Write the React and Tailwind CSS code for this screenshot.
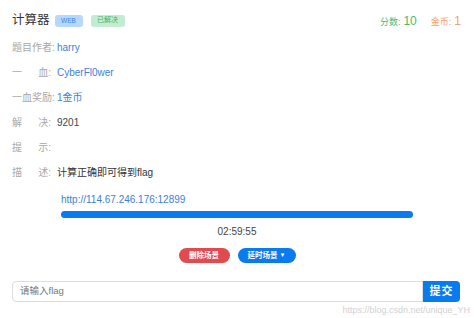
export default function App() {
  const rows = [
    { label: ["题", "目", "作", "者:"], value: "harry", color: "text-[#3d7fd9]" },
    { label: ["一", "血:"], value: "CyberFl0wer", color: "text-[#3d7fd9]" },
    { label: ["一", "血", "奖", "励:"], value: "1金币", color: "text-[#3d7fd9]" },
    { label: ["解", "决:"], value: "9201", color: "text-[#444]" },
    { label: ["提", "示:"], value: "", color: "text-[#444]" },
    { label: ["描", "述:"], value: "计算正确即可得到flag", color: "text-[#333]" },
  ]

  return (
    <div className="w-[474px] h-[318px] bg-white overflow-hidden font-['Liberation_Sans','Noto_Sans_CJK_SC',sans-serif]">
      <div className="pl-[12px] pr-[13px] pt-[13px]">
        {/* header */}
        <div className="flex items-center justify-between h-[15px]">
          <div className="flex items-center">
            <span className="text-[12.5px] text-[#333] leading-none">计算器</span>
            <span className="ml-[5px] w-[28px] h-[12px] rounded-[3px] bg-[#b6d8ff] text-[#3a86e6] text-[6.5px] flex items-center justify-center">
              WEB
            </span>
            <span className="ml-[8px] w-[34px] h-[12px] rounded-[3px] bg-[#c3ecd1] text-[#45b86e] text-[7px] flex items-center justify-center">
              已解决
            </span>
          </div>
          <div className="flex items-baseline">
            <span className="text-[#4cb96f] text-[9px]">分数:</span>
            <span className="text-[#4cb96f] text-[12px] ml-[3px]">10</span>
            <span className="text-[#f2a36a] text-[9px] ml-[14px]">金币:</span>
            <span className="text-[#f2a36a] text-[12px] ml-[3px]">1</span>
          </div>
        </div>

        {/* info rows */}
        <div className="mt-[7px] flex flex-col">
          {rows.map((r, i) => (
            <div key={i} className="flex items-center h-[25px] text-[10px]">
              <div className="w-[39px] flex justify-between text-[#a8a8a8]">
                {r.label.map((c, j) => (
                  <span key={j}>{c}</span>
                ))}
              </div>
              <span className={`ml-[6px] ${r.color}`}>{r.value}</span>
            </div>
          ))}
        </div>
      </div>

      {/* scene */}
      <div className="ml-[61px] w-[352px] flex flex-col">
        <div className="mt-[7px] h-[14px] flex items-center text-[10px] text-[#3d7fd9]">
          http://114.67.246.176:12899
        </div>
        <div className="mt-[5px] h-[7px] rounded-full bg-[#0a7bef]"></div>
        <div className="mt-[6px] h-[14px] flex items-center justify-center text-[10px] text-[#444]">
          02:59:55
        </div>
        <div className="mt-[10px] flex justify-center gap-[8px]">
          <button className="w-[51px] h-[15px] rounded-full bg-[#e04b4f] text-white text-[7.5px] font-bold flex items-center justify-center">
            删除场景
          </button>
          <button className="w-[58px] h-[15px] rounded-full bg-[#0a7bef] text-white text-[7.5px] font-bold flex items-center justify-center gap-[2px]">
            延时场景
            <span className="text-[6px]">▼</span>
          </button>
        </div>
      </div>

      {/* flag input */}
      <div className="mt-[18px] pl-[12px] pr-[14px] flex h-[21px]">
        <div className="flex-1 border border-[#dedede] rounded-l-[4px] flex items-center pl-[7px] text-[9.5px] text-[#777]">
          请输入flag
        </div>
        <button className="w-[37px] bg-[#0a7bef] rounded-r-[4px] text-white text-[11px] font-bold flex items-center justify-center tracking-[1px]">
          提交
        </button>
      </div>
      <div className="mt-[2px] pr-[4px] text-right text-[9px] text-[#d2d2d2] leading-[12px]">
        https://blog.csdn.net/unique_YH
      </div>
    </div>
  )
}
